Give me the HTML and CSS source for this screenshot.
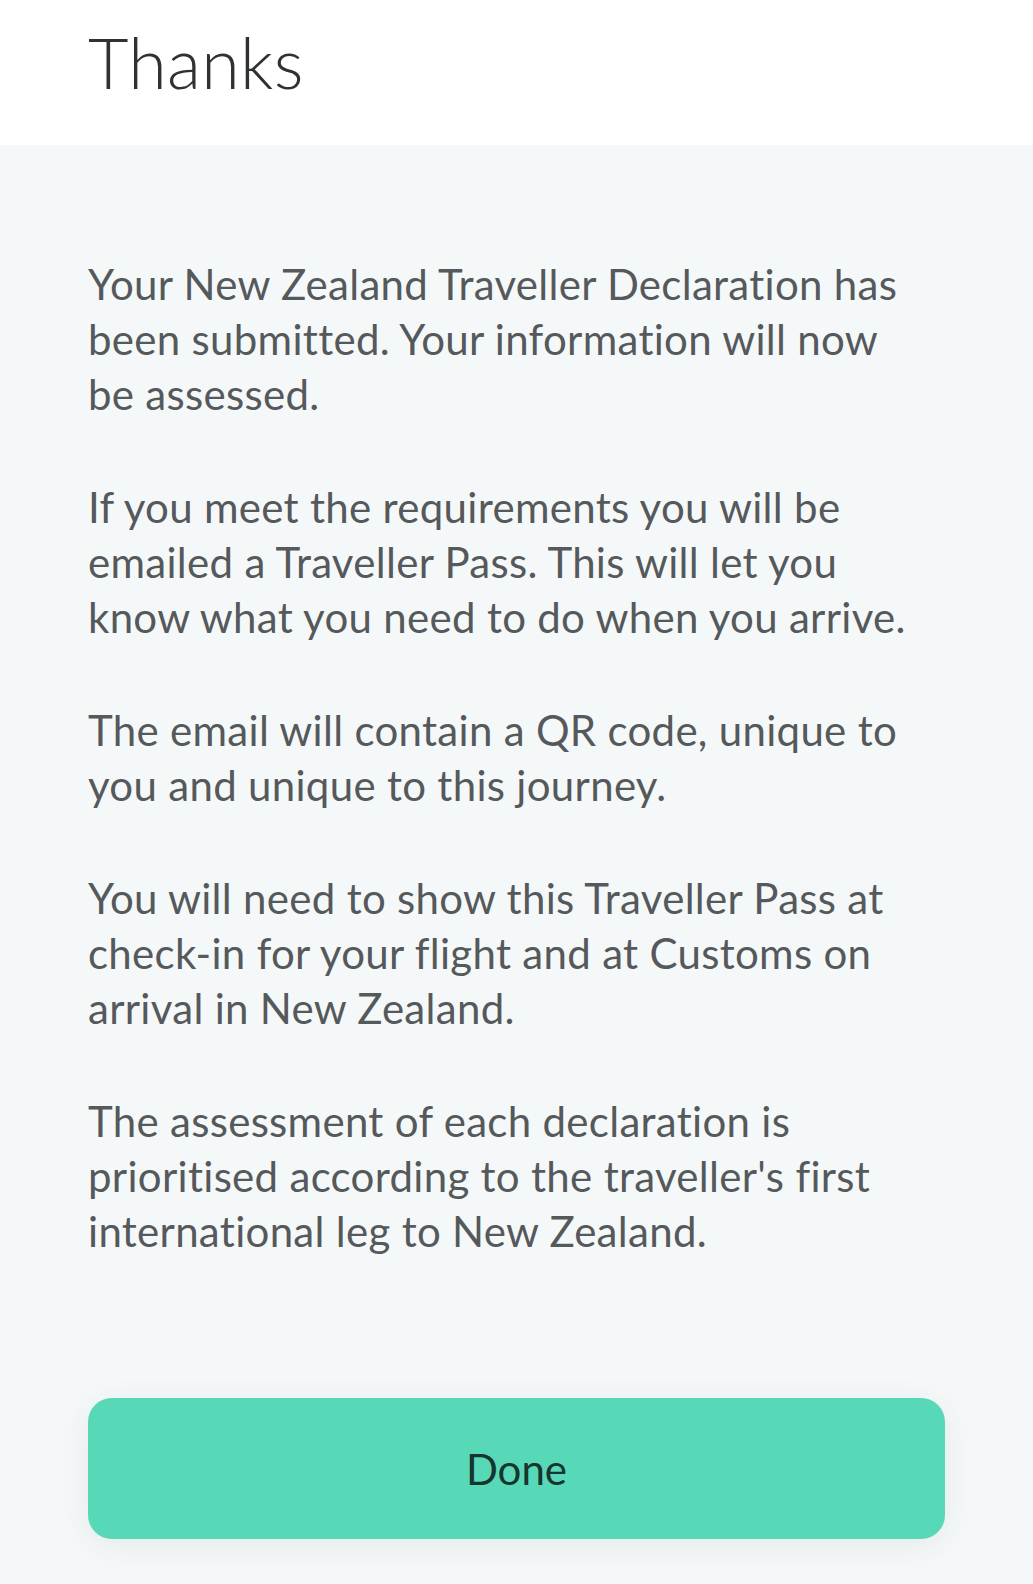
FILE: index.html
```html
<!DOCTYPE html>
<html lang="en">
<head>
<meta charset="utf-8">
<title>Thanks</title>
<link rel="stylesheet" href="styles.css">
</head>
<body>
<div class="page">
  <header class="header">
    <h1 class="title">Thanks</h1>
  </header>
  <main class="content">
    <div class="copy">
      <p>Your New Zealand Traveller Declaration has been submitted. Your information will now be assessed.</p>
      <p>If you meet the requirements you will be emailed a Traveller Pass. This will let you know what you need to do when you arrive.</p>
      <p>The email will contain a QR code, unique to you and unique to this journey.</p>
      <p>You will need to show this Traveller Pass at check-in for your flight and at Customs on arrival in New Zealand.</p>
      <p>The assessment of each declaration is prioritised according to the traveller's first international leg to New Zealand.</p>
    </div>
    <div class="actions">
      <button class="done" type="button">Done</button>
    </div>
  </main>
</div>
</body>
</html>
```

FILE: styles.css
```css
* { box-sizing: border-box; }
html, body { margin: 0; padding: 0; }
body {
  font-family: "Lato", "Open Sans", sans-serif;
  font-variant-ligatures: none;
  background: #f5f8f8;
  width: 1033px;
  height: 1584px;
  overflow: hidden;
}
.page {
  display: flex;
  flex-direction: column;
  height: 1584px;
}
.header {
  background: #ffffff;
  height: 145px;
  padding: 0 88px;
}
.title {
  margin: 0;
  font-weight: 300;
  font-size: 70px;
  line-height: 70px;
  padding-top: 27px;
  color: #2f3233;
  letter-spacing: 0.3px;
}
.content {
  flex: 1;
  background: #f5f8f8;
  padding: 112px 88px 0 88px;
  display: flex;
  flex-direction: column;
}
.copy {
  max-width: 832px;
}
.copy p {
  margin: 0 0 58px 0;
  font-size: 42px;
  line-height: 55px;
  letter-spacing: 0.3px;
  color: #55595c;
}
.copy p:last-child { margin-bottom: 0; }
.actions {
  margin-top: 139px;
}
.done {
  display: block;
  width: 100%;
  height: 141px;
  border: none;
  border-radius: 24px;
  background: #57d8b6;
  color: #17352f;
  font-family: "Lato", "Open Sans", sans-serif;
  font-size: 42px;
  box-shadow: 0 6px 30px rgba(40, 60, 60, 0.08);
  cursor: pointer;
}
```
